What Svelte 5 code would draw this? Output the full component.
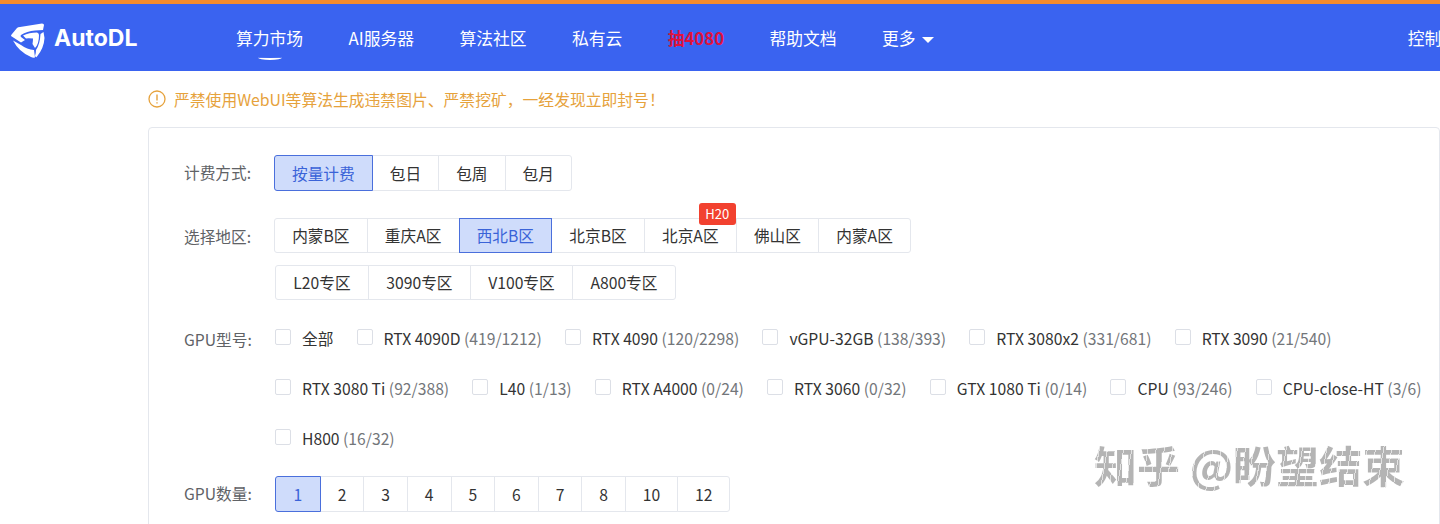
<script>
  const nav = ['AI服务器', '算法社区', '私有云'];
  const billing = ['按量计费', '包日', '包周', '包月'];
  const regions = ['内蒙B区', '重庆A区', '西北B区', '北京B区', '北京A区', '佛山区', '内蒙A区'];
  const special = ['L20专区', '3090专区', 'V100专区', 'A800专区'];
  const gpus = [
    ['全部', ''],
    ['RTX 4090D', '(419/1212)'],
    ['RTX 4090', '(120/2298)'],
    ['vGPU-32GB', '(138/393)'],
    ['RTX 3080x2', '(331/681)'],
    ['RTX 3090', '(21/540)'],
    ['RTX 3080 Ti', '(92/388)'],
    ['L40', '(1/13)'],
    ['RTX A4000', '(0/24)'],
    ['RTX 3060', '(0/32)'],
    ['GTX 1080 Ti', '(0/14)'],
    ['CPU', '(93/246)'],
    ['CPU-close-HT', '(3/6)'],
    ['H800', '(16/32)']
  ];
  const counts = ['1', '2', '3', '4', '5', '6', '7', '8', '10', '12'];
</script>

<div class="page">
  <header>
    <a class="logo" href="/">
      <svg width="42" height="42" viewBox="0 0 42 42" fill="#fff">
        <!-- three swirled bands of the mark -->
        <path d="M5 19 Q5 18 6 17 L11 11 Q12 10 14 10 L36 6.500 Q38 6.500 38 8 L37 13 L29 13.500 Q21 14 15 18 Q14 19 15 20 L19 23 L15 25.500 Z" />
        <path d="M17 18.500 Q23 15.500 31 15.500 Q33 16 33 18 Q33 27 29 31 L26.500 27 Q27 24 27 21.500 Q22 21 20 21.500 Z" />
        <path d="M37.500 15 L38.500 21 Q38 31 31 39.500 Q30 41 29 39 Q30 36 30 33 Q34 27 34.500 17 Z" />
        <path d="M7 23.500 L15 28 Q21 32.500 28 33 L29 40.500 Q27 41 25 40 Q13 35 7 23.500 Z" />
      </svg>
      <span>AutoDL</span>
    </a>
    <nav>
      <a class="active" href="/">算力市场</a>
      {#each nav as item}
        <a href="/">{item}</a>
      {/each}
      <a class="promo" href="/">抽4080</a>
      <a href="/">帮助文档</a>
      <a href="/">更多<i class="caret"></i></a>
    </nav>
    <a class="console" href="/">控制台</a>
  </header>

  <p class="notice">
    <svg width="18" height="18" viewBox="0 0 18 18" fill="none" stroke="#e6a23c">
      <circle cx="9" cy="9" r="8" stroke-width="1.3" />
      <path d="M9 4.500v6M9 12.200v1.400" stroke-width="1.400" />
    </svg>
    严禁使用WebUI等算法生成违禁图片、严禁挖矿，一经发现立即封号！
  </p>

  <section class="card">
    <div class="row first">
      <span class="label">计费方式:</span>
      <div class="group shifted">
        {#each billing as item, i}
          <button class:on={i === 0}>{item}</button>
        {/each}
      </div>
    </div>

    <div class="row regions">
      <span class="label">选择地区:</span>
      <div class="stack">
        <div class="group shifted">
          {#each regions as item, i}
            <button class:on={i === 2}>
              {item}
              {#if i === 4}<em class="badge">H20</em>{/if}
            </button>
          {/each}
        </div>
        <div class="group special">
          {#each special as item}
            <button>{item}</button>
          {/each}
        </div>
      </div>
    </div>

    <div class="row gpu">
      <span class="label">GPU型号:</span>
      <div class="checks">
        {#each gpus as [name, stock]}
          <label class="check">
            <i class="box"></i>
            <span>{name} <small>{stock}</small></span>
          </label>
        {/each}
      </div>
    </div>

    <div class="row">
      <span class="label">GPU数量:</span>
      <div class="group">
        {#each counts as item, i}
          <button class="num" class:on={i === 0}>{item}</button>
        {/each}
      </div>
    </div>
  </section>

  <div class="mark">知乎 @盼望结束</div>
</div>

<style>
  :global(body) {
    margin: 0;
    background: #fff;
    overflow: hidden;
  }

  .page {
    position: relative;
    width: 1440px;
    height: 524px;
    overflow: hidden;
    font-family: "Noto Sans CJK SC", "Noto Sans", sans-serif;
    color: #303133;
  }

  a {
    color: inherit;
    text-decoration: none;
  }

  header {
    display: flex;
    align-items: center;
    height: 67px;
    border-top: 4px solid #f68b2c;
    background: #3a63f0;
    color: #fff;
    white-space: nowrap;
  }

  .logo {
    display: flex;
    align-items: center;
    gap: 6px;
    width: 236px;
    padding-left: 6px;
    box-sizing: border-box;
    font: 700 23px Inter, sans-serif;
  }

  nav {
    display: flex;
    gap: 45.400px;
    font-size: 16.800px;
    flex: 1;
  }

  nav a {
    position: relative;
  }

  .active::after {
    content: "";
    position: absolute;
    left: 22px;
    bottom: -10px;
    width: 24px;
    height: 5px;
    border-bottom: 2px solid #fff;
    border-radius: 0 0 50% 50%;
    box-sizing: border-box;
  }

  .promo {
    color: #e0123c;
    font-weight: 700;
  }

  .caret {
    display: inline-block;
    margin-left: 6px;
    border: 6px solid transparent;
    border-top: 6px solid #fff;
    border-bottom: 0;
    vertical-align: middle;
  }

  .console {
    font-size: 16.800px;
    margin-right: -18px;
  }

  .notice {
    display: flex;
    align-items: center;
    gap: 8px;
    height: 56px;
    margin: 0 0 0 148px;
    color: #e6a23c;
    font-size: 15.800px;
    white-space: nowrap;
  }

  .notice svg {
    flex: none;
  }

  .card {
    width: 1292px;
    height: 440px;
    margin-left: 148px;
    padding: 27px 0 0 35px;
    box-sizing: border-box;
    border: 1px solid #e4e7ed;
    border-radius: 4px;
  }

  .row {
    display: flex;
    align-items: flex-start;
    margin-bottom: 27px;
  }

  .row.regions {
    margin-bottom: 21px;
  }

  .row.gpu {
    margin-bottom: 13px;
  }

  .label {
    flex: none;
    width: 91px;
    line-height: 36px;
    font-size: 15.700px;
    color: #606266;
  }

  .gpu .label,
  .regions .label {
    padding-top: 1px;
  }

  .stack {
    display: flex;
    flex-direction: column;
    gap: 12px;
  }

  .stack button {
    height: 35px;
    padding: 0 17.150px;
  }

  .stack .special button {
    padding: 0 17.350px;
  }

  .group {
    display: flex;
  }

  .shifted {
    margin-left: -1px;
  }

  button {
    position: relative;
    height: 36px;
    padding: 0 17px;
    margin-left: -1px;
    border: 1px solid #e4e7ed;
    background: #fff;
    color: #333;
    font: 15.700px "Noto Sans CJK SC", "Noto Sans", sans-serif;
    white-space: nowrap;
  }

  button:first-child {
    margin-left: 0;
    border-radius: 3px 0 0 3px;
  }

  button:last-child {
    border-radius: 0 3px 3px 0;
  }

  button.on {
    z-index: 1;
    background: #cfdcfb;
    border-color: #4a6fdc;
    color: #3a63d8;
  }

  button.num {
    padding: 0 16.950px;
  }

  button.num.on {
    padding: 0 17.500px;
  }

  .badge {
    position: absolute;
    top: -16px;
    right: 0;
    padding: 0 6.500px;
    height: 22px;
    line-height: 22px;
    border-radius: 3px;
    background: #f2412f;
    color: #fff;
    font-size: 13px;
    font-style: normal;
  }

  .checks {
    display: flex;
    flex: none;
    flex-wrap: wrap;
    width: 1175px;
    margin-top: -8px;
  }

  .check {
    display: flex;
    align-items: center;
    height: 50px;
    margin-right: 23.200px;
    font-size: 15.700px;
    white-space: nowrap;
    color: #333;
  }

  .box {
    width: 14px;
    height: 14px;
    margin-right: 11px;
    margin-top: -2px;
    border: 1px solid #dcdfe6;
    border-radius: 2px;
  }

  small {
    font-size: inherit;
    color: #73767a;
  }

  .mark {
    position: absolute;
    left: 1094px;
    top: 436px;
    font-size: 43px;
    font-weight: 700;
    line-height: 56px;
    white-space: nowrap;
    color: transparent;
    background: repeating-linear-gradient(100deg, #b4b4b4 0 7px, #e2e2e2 7px 8px);
    -webkit-background-clip: text;
    background-clip: text;
  }
</style>
